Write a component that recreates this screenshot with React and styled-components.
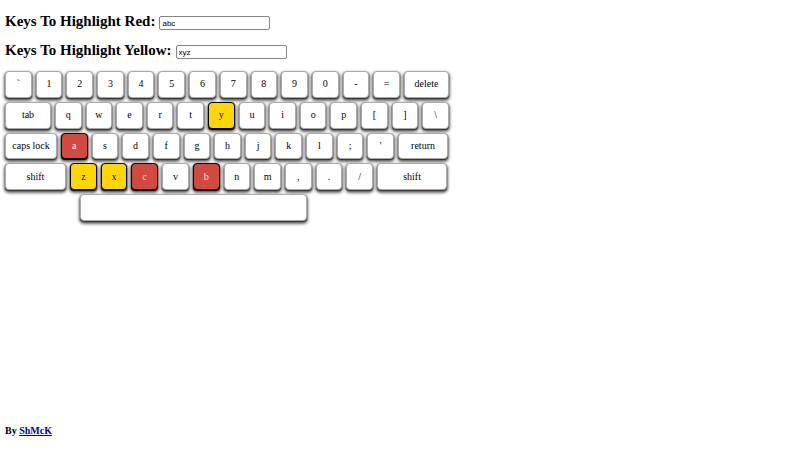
import * as React from 'react'
import styled, { createGlobalStyle } from 'styled-components'

const GlobalStyle = createGlobalStyle`
  * {
    box-sizing: border-box;
  }
  body {
    margin: 0;
    background: white;
    color: black;
    font-family: 'Liberation Serif', 'Times New Roman', serif;
    font-size: 10px;
  }
`

const Page = styled.main`
  display: flex;
  flex-direction: column;
  min-height: 100vh;
  padding: 13px 5px;
`

const Field = styled.div`
  display: flex;
  align-items: center;
  gap: 4px;
  margin-bottom: 12px;
`

const FieldLabel = styled.label`
  font-size: 15px;
  line-height: 17px;
  font-weight: bold;
`

const FieldInput = styled.input`
  width: 111px;
  height: 14px;
  margin-top: 3px;
  padding: 0 2px;
  border: 1px solid #858585;
  border-radius: 2px;
  font-family: 'Liberation Sans', Arial, sans-serif;
  font-size: 8px;
`

const Board = styled.div`
  display: grid;
  grid-template-rows: repeat(5, 1fr);
  gap: 4px;
  max-width: 444px;
  height: 150px;
`

const Row = styled.div`
  display: flex;
  gap: 4px;
  padding-left: ${({ $indent }) => $indent || 0}px;
  padding-right: ${({ $inset }) => $inset || 0}px;
`

const colors = {
  red: { background: '#d04a40', border: 'black', text: '#f4e4e2' },
  yellow: { background: '#ffd700', border: 'black', text: 'black' },
  plain: { background: 'white', border: '#aaa', text: 'black' },
}

const Key = styled.button`
  flex: ${({ $width }) => ($width ? `0 0 ${$width}px` : '1 1 0')};
  min-width: 0;
  padding: 0;
  border: 1px solid ${({ $color }) => colors[$color].border};
  border-radius: 4px;
  background: ${({ $color }) => colors[$color].background};
  color: ${({ $color }) => colors[$color].text};
  box-shadow:
    0 1px 1px ${({ $color }) => ($color === 'plain' ? '#333' : 'black')},
    0 2px 3px 1px #666;
  font-family: inherit;
  font-size: 10px;
  line-height: 12px;
  white-space: nowrap;
`

const Footer = styled.footer`
  margin-top: auto;
  font-size: 10px;
  line-height: 13px;
  font-weight: bold;
`

const AuthorLink = styled.a`
  color: #0000b4;
`

const rows = [
  { keys: [...'`1234567890-=', { name: 'delete', width: 45 }] },
  { keys: [{ name: 'tab', width: 46 }, ...'qwertyuiop[]\\'] },
  {
    inset: 1,
    keys: [
      { name: 'caps lock', width: 52 },
      ..."asdfghjkl;'",
      { name: 'return', width: 50 },
    ],
  },
  {
    inset: 2,
    keys: [
      { name: 'shift', width: 61 },
      ...'zxcvbnm,./',
      { name: 'shift', width: 70 },
    ],
  },
  { indent: 75, keys: [{ name: '', label: 'space', width: 227 }] },
]

const getColor = (name, red, yellow) => {
  if (name.length !== 1) return 'plain'
  if (red.includes(name)) return 'red'
  if (yellow.includes(name)) return 'yellow'
  return 'plain'
}

const Keyboard = ({ red, yellow }) => (
  <Board>
    {rows.map((row, i) => (
      <Row key={i} $indent={row.indent} $inset={row.inset}>
        {row.keys.map((item, j) => {
          const { name, label, width } =
            typeof item === 'string' ? { name: item } : item
          return (
            <Key
              key={j}
              type="button"
              aria-label={label}
              $width={width}
              $color={getColor(name, red, yellow)}
            >
              {name}
            </Key>
          )
        })}
      </Row>
    ))}
  </Board>
)

const App = () => {
  const [red, setRed] = React.useState('abc')
  const [yellow, setYellow] = React.useState('xyz')

  return (
    <Page>
      <GlobalStyle />
      <Field>
        <FieldLabel htmlFor="red">Keys To Highlight Red:</FieldLabel>
        <FieldInput
          id="red"
          value={red}
          onChange={(e) => setRed(e.target.value)}
        />
      </Field>
      <Field>
        <FieldLabel htmlFor="yellow">Keys To Highlight Yellow:</FieldLabel>
        <FieldInput
          id="yellow"
          value={yellow}
          onChange={(e) => setYellow(e.target.value)}
        />
      </Field>
      <Keyboard red={red} yellow={yellow} />
      <Footer>
        By <AuthorLink href="https://github.com/ShMcK">ShMcK</AuthorLink>
      </Footer>
    </Page>
  )
}

export default App
